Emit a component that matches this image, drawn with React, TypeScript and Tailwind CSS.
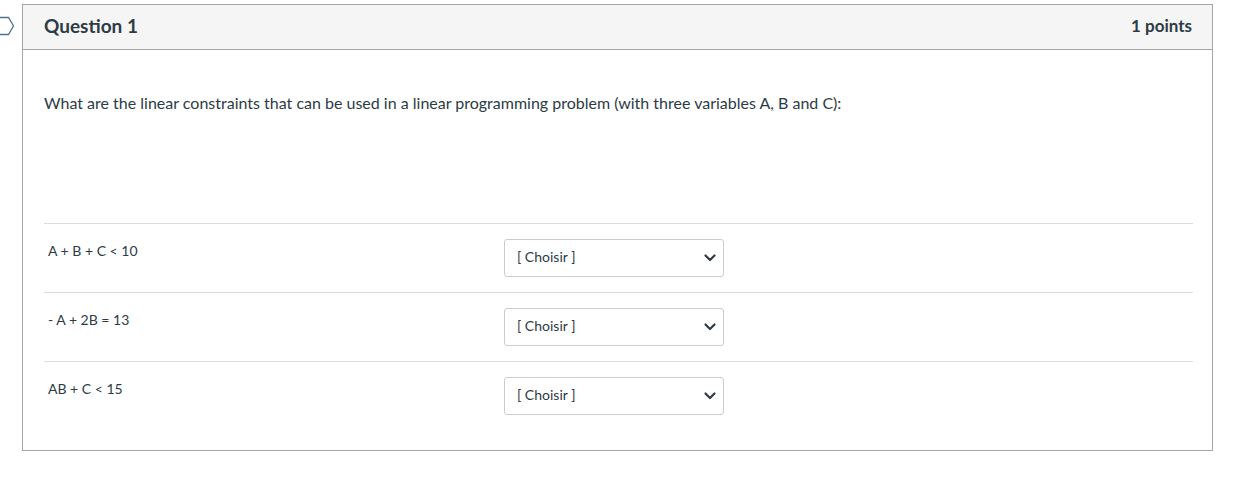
import React from "react";

const rows = ["A + B + C < 10", "- A + 2B = 13", "AB + C < 15"];

function Chevron() {
  return (
    <svg width="14" height="14" viewBox="0 0 14 14" fill="none">
      <path d="M2.5 4.5 L7 9 L11.5 4.5" stroke="#2d3b45" strokeWidth="2.2" strokeLinecap="round" strokeLinejoin="round" />
    </svg>
  );
}

export default function App() {
  return (
    <div className="relative bg-white w-[1249px] h-[480px] pt-[4px] text-[#2d3b45]" style={{ fontFamily: "Lato, 'Liberation Sans', sans-serif" }}>
      <svg className="absolute left-0 top-[16px]" width="16" height="20" viewBox="0 0 16 20" fill="none">
        <path d="M-4 1.5 L8.5 1.5 L13.5 10 L8.5 18.5 L-4 18.5" stroke="#4f7391" strokeWidth="1.3" />
      </svg>
      <div className="ml-[22px] w-[1191px] border border-[#a5a5a5]">
        <div className="h-[45px] bg-[#f5f5f5] border-b border-[#a5a5a5] flex items-center justify-between pl-[21px] pr-[20px] pb-[4px]">
          <span className="text-[19px] font-bold leading-none">Question 1</span>
          <span className="text-[17px] font-bold leading-none">1 points</span>
        </div>
        <div className="pl-[21px] pr-[19px] pt-[41px] pb-[20px]">
          <p className="text-[16px] leading-[24px]">
            What are the linear constraints that can be used in a linear programming problem (with three variables A, B and C):
          </p>
          <div className="mt-[108px]">
            {rows.map((r) => (
              <div key={r} className="border-t border-[#dcdcdc] flex pt-[15px] pb-[15px]">
                <div className="w-[460px] pl-[4px] pt-[3px] text-[14px] leading-[18px]">{r}</div>
                <div className="w-[220px] h-[38px] border border-[#c7cdd1] rounded-[3px] flex items-center justify-between pl-[12px] pr-[6px]">
                  <span className="text-[14px] leading-[18px] pb-[3px] text-[#2d3b45]">[ Choisir ]</span>
                  <Chevron />
                </div>
              </div>
            ))}
          </div>
        </div>
      </div>
    </div>
  );
}
